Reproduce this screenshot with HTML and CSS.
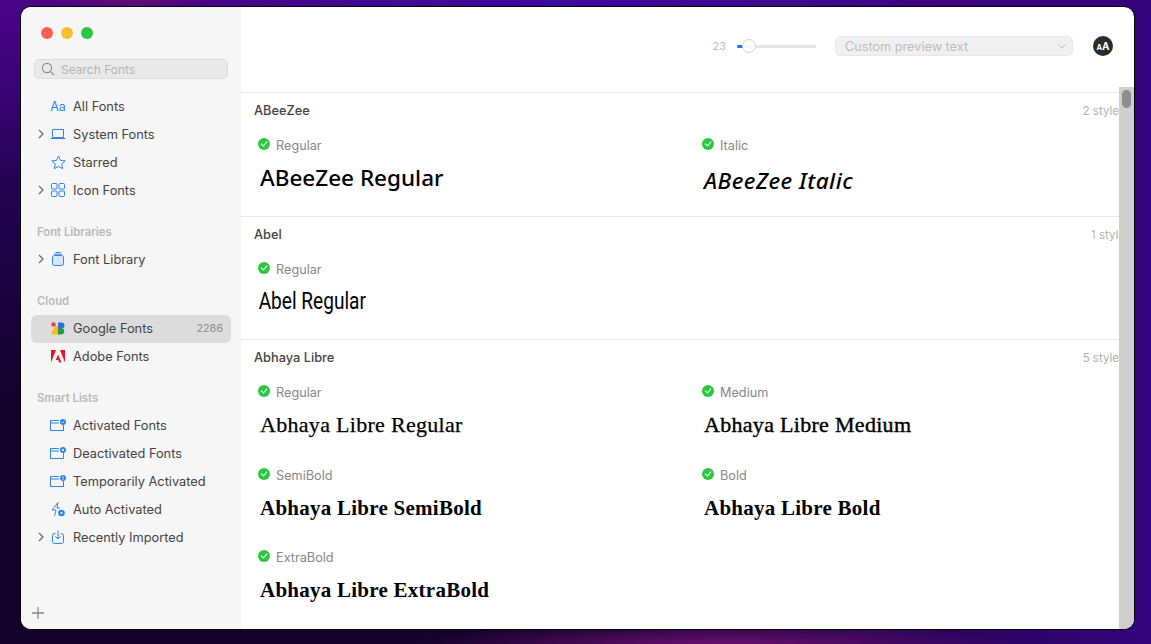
FILE: index.html
```html
<!DOCTYPE html>
<html lang="en">
<head>
  <meta charset="UTF-8">
  <title>Fonts</title>
  <link rel="stylesheet" href="styles.css">
</head>
<body>
  <div class="window">
    <aside class="sidebar">
      <div class="lights"><i class="red"></i><i class="yellow"></i><i class="green"></i></div>
      <div class="search">
        <svg width="14" height="14" viewBox="0 0 14 14" fill="none" stroke="#8c8c8c" stroke-width="1.1"><circle cx="6" cy="6" r="4.6"/><path d="M9.4 9.4 13 13"/></svg>
        <span>Search Fonts</span>
      </div>

      <ul class="nav first">
        <li><span class="arrow"></span><span class="icon aa">Aa</span>All Fonts</li>
        <li><span class="arrow">
          <svg width="6" height="10" viewBox="0 0 6 10" fill="none" stroke="#666" stroke-width="1.2"><path d="M1 1l4 4-4 4"/></svg></span>
          <span class="icon"><svg width="16" height="12" viewBox="0 0 16 12" fill="none" stroke="#2f84ee"><path d="M2.5 1.5h11v8h-11zM.5 10.5h15"/></svg></span>System Fonts</li>
        <li><span class="arrow"></span><span class="icon"><svg width="15" height="15" viewBox="0 0 15 15" fill="none" stroke="#2f84ee"><path d="M7.5 1l2 4.4 4.7.5-3.5 3.2 1 4.7-4.2-2.4-4.2 2.4 1-4.7L.8 5.900l4.700-.5z"/></svg></span>Starred</li>
        <li><span class="arrow">
          <svg width="6" height="10" viewBox="0 0 6 10" fill="none" stroke="#666" stroke-width="1.2"><path d="M1 1l4 4-4 4"/></svg></span>
          <span class="icon"><svg width="14" height="14" viewBox="0 0 14 14" fill="none" stroke="#2f84ee"><rect x=".5" y=".5" width="5.5" height="5.5" rx="1"/><rect x="8" y=".5" width="5.5" height="5.5" rx="1"/><rect x=".5" y="8" width="5.5" height="5.5" rx="1"/><rect x="8" y="8" width="5.5" height="5.5" rx="1"/></svg></span>Icon Fonts</li>
      </ul>

      <h2>Font Libraries</h2>
      <ul class="nav">
        <li><span class="arrow">
          <svg width="6" height="10" viewBox="0 0 6 10" fill="none" stroke="#666" stroke-width="1.2"><path d="M1 1l4 4-4 4"/></svg></span>
          <span class="icon"><svg width="12" height="14" viewBox="0 0 12 14" fill="none" stroke="#2f84ee"><rect x=".5" y="3.500" width="11" height="10" rx="2" fill="#d6e6fb"/><path d="M2 2.200h8M3.500.5h5"/></svg></span>Font Library</li>
      </ul>

      <h2>Cloud</h2>
      <ul class="nav">
        <li class="active"><span class="arrow"></span>
          <span class="icon"><svg width="14" height="13" viewBox="0 0 14 13"><path d="M0 12.500 4 4h3v8.500z" fill="#f8bd16"/><circle cx="2.500" cy="2.500" r="2.300" fill="#e8453c"/><path d="M7 .5h3.500a3 3 0 0 1 0 6H7z" fill="#2f6fe0"/><path d="M7 6h3.500a3.300 3.300 0 0 1 0 6.500H7z" fill="#1f9a47"/></svg></span>Google Fonts<em>2286</em></li>
        <li><span class="arrow"></span>
          <span class="icon"><svg width="14" height="13" viewBox="0 0 14 13" fill="#e8141c"><path d="M0 0h5L0 12.500zM9 0h5v12.500zM7 4.500l3.400 8H8.200l-1-2.500H4.800z"/></svg></span>Adobe Fonts</li>
      </ul>

      <h2>Smart Lists</h2>
      <ul class="nav">
        <li><span class="arrow"></span><span class="icon"><svg width="16" height="12" viewBox="0 0 16 12" fill="none" stroke="#2f84ee"><path d="M9 1.500H.5v10h13V6M.5 4H9"/><circle cx="13" cy="3" r="3" fill="#2f84ee" stroke="none"/><path d="M11.700 3l1 1 1.600-2" stroke="#fff" stroke-width=".8"/></svg></span>Activated Fonts</li>
        <li><span class="arrow"></span><span class="icon"><svg width="16" height="12" viewBox="0 0 16 12" fill="none" stroke="#2f84ee"><path d="M9 1.500H.5v10h13V6M.5 4H9"/><circle cx="13" cy="3" r="3" fill="#2f84ee" stroke="none"/><path d="M12 2l2 2M14 2l-2 2" stroke="#fff" stroke-width=".8"/></svg></span>Deactivated Fonts</li>
        <li><span class="arrow"></span><span class="icon"><svg width="16" height="12" viewBox="0 0 16 12" fill="none" stroke="#2f84ee"><path d="M9 1.500H.5v10h13V6M.5 4H9"/><circle cx="13" cy="3" r="3" fill="#2f84ee" stroke="none"/><path d="M13 1.300v2.200M13 4.200v.8" stroke="#fff" stroke-width=".9"/></svg></span>Temporarily Activated</li>
        <li><span class="arrow"></span><span class="icon"><svg width="14" height="15" viewBox="0 0 14 15" fill="none" stroke="#2f84ee"><path d="M7 .5 1 8h4l-1.500 6"/><path d="M7 .5 6 6h3"/><circle cx="10.500" cy="11" r="3.300" fill="#2f84ee" stroke="none"/><circle cx="10.500" cy="11" r="1" fill="#fff" stroke="none"/></svg></span>Auto Activated</li>
        <li><span class="arrow">
          <svg width="6" height="10" viewBox="0 0 6 10" fill="none" stroke="#666" stroke-width="1.2"><path d="M1 1l4 4-4 4"/></svg></span>
          <span class="icon"><svg width="12" height="14" viewBox="0 0 12 14" fill="none" stroke="#2f84ee"><path d="M3.500 3.500h-1a2 2 0 0 0-2 2v6a2 2 0 0 0 2 2h7a2 2 0 0 0 2-2v-6a2 2 0 0 0-2-2h-1M6 .5v8M3.500 6.500 6 9l2.500-2.500"/></svg></span>Recently Imported</li>
      </ul>

      <div class="add">
        <svg width="12" height="12" viewBox="0 0 12 12" stroke="#8a8a8a" stroke-width="1.3"><path d="M6 0v12M0 6h12"/></svg>
      </div>
    </aside>

    <main class="content">
      <header class="toolbar">
        <span class="size">23</span>
        <div class="slider"><div class="fill"></div><div class="knob"></div></div>
        <div class="select">
          <span>Custom preview text</span>
          <svg width="8" height="5" viewBox="0 0 8 5" fill="none" stroke="#bbb"><path d="M.5.500 4 4 7.500.500"/></svg>
        </div>
        <div class="avatar"><small>A</small>A</div>
      </header>

      <section class="family">
        <div class="family-head"><h3>ABeeZee</h3><span>2 styles</span></div>
        <div class="styles">
          <div class="style tall">
            <div class="label"><b class="check"></b>Regular</div>
            <div class="preview abeezee">ABeeZee Regular</div>
          </div>
          <div class="style tall">
            <div class="label"><b class="check"></b>Italic</div>
            <div class="preview abeezee italic">ABeeZee Italic</div>
          </div>
        </div>
      </section>

      <section class="family">
        <div class="family-head"><h3>Abel</h3><span>1 style</span></div>
        <div class="styles">
          <div class="style single">
            <div class="label"><b class="check"></b>Regular</div>
            <div class="preview abel">Abel Regular</div>
          </div>
        </div>
      </section>

      <section class="family open">
        <div class="family-head"><h3>Abhaya Libre</h3><span>5 styles</span></div>
        <div class="styles">
          <div class="style">
            <div class="label"><b class="check"></b>Regular</div>
            <div class="preview abhaya w400">Abhaya Libre Regular</div>
          </div>
          <div class="style">
            <div class="label"><b class="check"></b>Medium</div>
            <div class="preview abhaya w500">Abhaya Libre Medium</div>
          </div>
          <div class="style short">
            <div class="label"><b class="check"></b>SemiBold</div>
            <div class="preview abhaya w700">Abhaya Libre SemiBold</div>
          </div>
          <div class="style short">
            <div class="label"><b class="check"></b>Bold</div>
            <div class="preview abhaya w700">Abhaya Libre Bold</div>
          </div>
          <div class="style">
            <div class="label"><b class="check"></b>ExtraBold</div>
            <div class="preview abhaya w700">Abhaya Libre ExtraBold</div>
          </div>
        </div>
      </section>

      <div class="scrollbar"><div class="thumb"></div></div>
    </main>
  </div>
</body>
</html>
```

FILE: styles.css
```css
* {
  box-sizing: border-box;
}

html, body {
  height: 100%;
}

body {
  margin: 0;
  padding: 6px 16px 14px 20px;
  overflow: hidden;
  font-family: Inter, "Noto Sans", sans-serif;
  background:
    radial-gradient(ellipse 300px 22px at 720px 644px, #6a0f70 0%, transparent 100%),
    radial-gradient(ellipse 80px 8px at 130px 0, #6a0c70 0%, transparent 100%),
    radial-gradient(ellipse 400px 10px at 560px 0, #3a0ca4 0%, transparent 100%),
    linear-gradient(90deg, transparent 55%, #34047c 100%),
    linear-gradient(180deg, #4a0488 0, #3c0478 12%, #230452 28%, #14022e 60%, #14022c 100%);
}

.window {
  display: flex;
  height: 624px;
  border: 1px solid #000;
  border-radius: 11px;
  overflow: hidden;
  background: #fff;
}

/* sidebar */
.sidebar {
  position: relative;
  flex: 0 0 220px;
  padding: 0 10px;
  background: #f6f6f6;
}

.lights {
  display: flex;
  gap: 8px;
  padding: 20px 0 0 10px;
}

.lights i {
  width: 12px;
  height: 12px;
  border-radius: 50%;
}

.red { background: #ff5f57; }
.yellow { background: #febc2e; }
.green { background: #2ac840; }

.search {
  display: flex;
  align-items: center;
  gap: 6px;
  height: 20px;
  margin: 20px 0 0 3px;
  padding-left: 6px;
  width: 194px;
  background: #e9e9e9;
  border: 1px solid #dcdcdc;
  border-radius: 5px;
  font-size: 12px;
  color: #b4b4b4;
}

.nav {
  list-style: none;
  margin: 0;
  padding: 0;
}

.nav.first {
  margin-top: 14px;
}

.nav li {
  display: flex;
  align-items: center;
  height: 28px;
  padding-bottom: 2px;
  font-size: 12.8px;
  color: #444;
}

.nav li.active {
  background: #dcdcdc;
  border-radius: 6px;
}

.arrow {
  display: flex;
  justify-content: center;
  flex: 0 0 19px;
}

.icon {
  display: flex;
  justify-content: center;
  align-items: center;
  flex: 0 0 16px;
  margin-right: 7px;
}

.icon.aa {
  font-size: 12.500px;
  color: #2f84ee;
}

.nav em {
  margin-left: auto;
  padding-right: 8px;
  font-style: normal;
  font-size: 10.800px;
  color: #8f8f8f;
}

.sidebar h2 {
  margin: 21px 0 0 6px;
  height: 13px;
  line-height: 13px;
  font-size: 11.300px;
  font-weight: 600;
  color: #b9b9b9;
}

.sidebar h2 + .nav {
  margin-top: 7px;
}

.add {
  position: absolute;
  left: 11px;
  bottom: 10px;
  display: flex;
}

/* main */
.content {
  position: relative;
  flex: 1;
  min-width: 0;
  overflow: hidden;
}

.toolbar {
  display: flex;
  align-items: center;
  justify-content: flex-end;
  height: 86px;
  padding: 0 21px 7px 0;
  border-bottom: 1px solid #e6e6e6;
}

.size {
  font-size: 11px;
  color: #bdbdbd;
  margin-right: 11px;
}

.slider {
  position: relative;
  width: 79px;
  height: 3px;
  margin-right: 19px;
  background: #e4e4e4;
  border-radius: 2px;
}

.fill {
  width: 6px;
  height: 3px;
  background: #0a7cf5;
  border-radius: 2px;
}

.knob {
  position: absolute;
  left: 5px;
  top: -6px;
  width: 14px;
  height: 14px;
  background: #fff;
  border: 1px solid #d2d2d2;
  border-radius: 50%;
}

.select {
  display: flex;
  align-items: center;
  justify-content: space-between;
  width: 238px;
  height: 20px;
  margin-right: 20px;
  padding: 0 6px 0 9px;
  background: #f0f0f0;
  border: 1px solid #e8e8e8;
  border-radius: 5px;
  font-size: 12.700px;
  color: #bcbcbc;
}

.avatar {
  display: flex;
  align-items: baseline;
  justify-content: center;
  width: 20px;
  height: 20px;
  line-height: 20px;
  background: #2b2b2b;
  border-radius: 50%;
  font-size: 10px;
  font-weight: 700;
  color: #fff;
}

.avatar small {
  font-size: 7.500px;
}

.family {
  padding: 0 0 0 13px;
  border-bottom: 1px solid #e6e6e6;
}

.family.open {
  border-bottom: 0;
}

.family-head {
  display: flex;
  justify-content: space-between;
  align-items: center;
  height: 35px;
}

.family-head h3 {
  margin: 0;
  font-size: 12.800px;
  font-weight: 500;
  color: #444;
}

.family-head span {
  margin-right: 9px;
  white-space: nowrap;
  font-size: 11.500px;
  color: #b0b0b0;
}

.styles {
  display: grid;
  grid-template-columns: 444px 1fr;
}

.style {
  height: 83px;
  padding: 9px 0 0 3px;
}

.style.tall {
  height: 88px;
}

.style.single {
  height: 87px;
}

.style.short {
  height: 82px;
}

.label {
  display: flex;
  align-items: center;
  gap: 6px;
  height: 16px;
  font-size: 12.700px;
  color: #888;
}

.check {
  position: relative;
  width: 12px;
  height: 12px;
  margin: -3px 0 0 1px;
  background: #2bc840;
  border-radius: 50%;
}

.check::after {
  content: '';
  position: absolute;
  left: 3.500px;
  top: 2.500px;
  width: 3px;
  height: 5px;
  border-right: 1.300px solid #fff;
  border-bottom: 1.300px solid #fff;
  transform: rotate(40deg);
}

.preview {
  margin-top: 9px;
  padding-left: 3px;
  white-space: nowrap;
  color: #000;
}

.abeezee {
  font-family: "Noto Sans", sans-serif;
  font-size: 22.500px;
  font-weight: 500;
  line-height: 31px;
}

.abeezee.italic {
  margin-top: 12px;
  font-style: italic;
  letter-spacing: .5px;
}

.abel {
  padding-left: 2px;
  font-family: Roboto, "Liberation Sans", sans-serif;
  font-size: 23px;
  line-height: 31px;
  transform: scaleX(.83);
  transform-origin: left;
}

.abhaya {
  font-family: "Liberation Serif", serif;
  font-size: 21px;
  line-height: 31px;
  letter-spacing: .25px;
}

.w400, .w500 {
  font-size: 22px;
  letter-spacing: .3px;
  -webkit-text-stroke: .25px #000;
}

.w500 {
  -webkit-text-stroke-width: .4px;
}

.w700 {
  margin-top: 10px;
  font-weight: 700;
}

.scrollbar {
  position: absolute;
  top: 80px;
  right: 0;
  bottom: 0;
  width: 15px;
  background: #cfcfcf;
}

.thumb {
  width: 9px;
  height: 18px;
  margin: 3px 0 0 3px;
  background: #8e8e8e;
  border-radius: 5px;
}
```
